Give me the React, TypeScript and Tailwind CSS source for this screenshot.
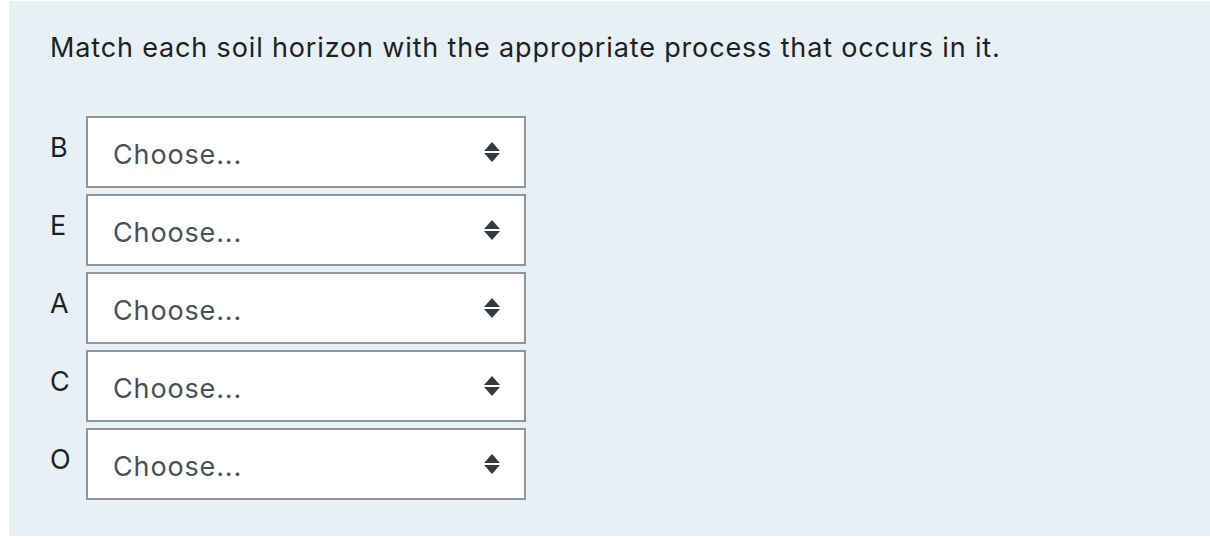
const rows = ["B", "E", "A", "C", "O"];

const SortArrows = () => (
  <svg width="16" height="20" viewBox="0 0 16 20" className="text-[#343a40]">
    <path d="M8 0 L16 9 L0 9 Z" fill="currentColor" />
    <path d="M0 11 L16 11 L8 20 Z" fill="currentColor" />
  </svg>
);

const App = () => {
  return (
    <div className="w-[1210px] h-[539px] bg-white font-['Inter','Liberation_Sans',Arial,sans-serif] tracking-[0.85px]">
      <div className="ml-[9px] mt-[1px] h-[535px] bg-[#e7f0f4] pl-[41px] pt-[31px]">
        <p className="text-[27px] leading-[32px] text-[#1d2125]">
          Match each soil horizon with the appropriate process that occurs in it.
        </p>

        <div className="mt-[52px] flex flex-col gap-[6px]">
          {rows.map((r) => (
            <div key={r} className="flex">
              <div className="w-[36px] pt-[16px] text-[27px] leading-[32px] text-[#1d2125]">{r}</div>
              <div className="w-[440px] h-[72px] border-2 border-[#8f959e] bg-white flex items-center justify-between pl-[25px] pr-[24px]">
                <span className="text-[27px] text-[#495057] pt-[6px]">Choose...</span>
                <SortArrows />
              </div>
            </div>
          ))}
        </div>
      </div>
    </div>
  );
};

export default App;
